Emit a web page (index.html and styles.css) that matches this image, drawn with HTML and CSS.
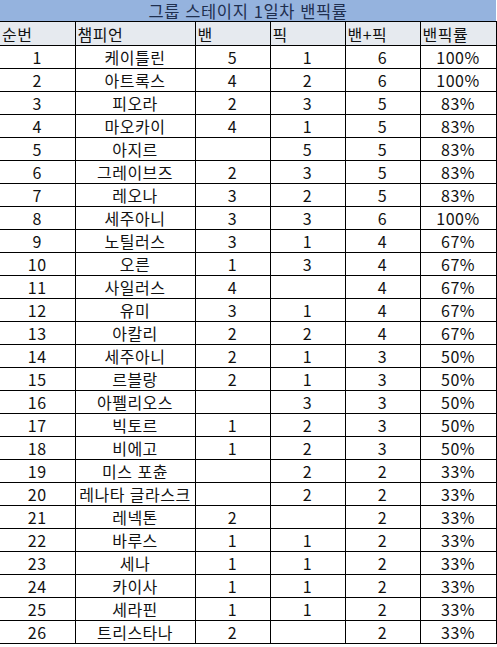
FILE: index.html
```html
<!DOCTYPE html>
<html lang="ko">
<head>
<meta charset="utf-8">
<title>그룹 스테이지 1일차 밴픽률</title>
<link rel="stylesheet" href="styles.css">
</head>
<body>
<table class="sheet">
<colgroup>
<col class="c-no"><col class="c-champ"><col class="c-n"><col class="c-n"><col class="c-n"><col class="c-rate">
</colgroup>
<thead>
<tr class="title"><th colspan="6">그룹 스테이지 1일차 밴픽률</th></tr>
<tr class="head"><th>순번</th><th>챔피언</th><th>밴</th><th>픽</th><th>밴+픽</th><th>밴픽률</th></tr>
</thead>
<tbody>
<tr><td>1</td><td>케이틀린</td><td>5</td><td>1</td><td>6</td><td>100%</td></tr>
<tr><td>2</td><td>아트록스</td><td>4</td><td>2</td><td>6</td><td>100%</td></tr>
<tr><td>3</td><td>피오라</td><td>2</td><td>3</td><td>5</td><td>83%</td></tr>
<tr><td>4</td><td>마오카이</td><td>4</td><td>1</td><td>5</td><td>83%</td></tr>
<tr><td>5</td><td>아지르</td><td></td><td>5</td><td>5</td><td>83%</td></tr>
<tr><td>6</td><td>그레이브즈</td><td>2</td><td>3</td><td>5</td><td>83%</td></tr>
<tr><td>7</td><td>레오나</td><td>3</td><td>2</td><td>5</td><td>83%</td></tr>
<tr><td>8</td><td>세주아니</td><td>3</td><td>3</td><td>6</td><td>100%</td></tr>
<tr><td>9</td><td>노틸러스</td><td>3</td><td>1</td><td>4</td><td>67%</td></tr>
<tr><td>10</td><td>오른</td><td>1</td><td>3</td><td>4</td><td>67%</td></tr>
<tr><td>11</td><td>사일러스</td><td>4</td><td></td><td>4</td><td>67%</td></tr>
<tr><td>12</td><td>유미</td><td>3</td><td>1</td><td>4</td><td>67%</td></tr>
<tr><td>13</td><td>아칼리</td><td>2</td><td>2</td><td>4</td><td>67%</td></tr>
<tr><td>14</td><td>세주아니</td><td>2</td><td>1</td><td>3</td><td>50%</td></tr>
<tr><td>15</td><td>르블랑</td><td>2</td><td>1</td><td>3</td><td>50%</td></tr>
<tr><td>16</td><td>아펠리오스</td><td></td><td>3</td><td>3</td><td>50%</td></tr>
<tr><td>17</td><td>빅토르</td><td>1</td><td>2</td><td>3</td><td>50%</td></tr>
<tr><td>18</td><td>비에고</td><td>1</td><td>2</td><td>3</td><td>50%</td></tr>
<tr><td>19</td><td>미스 포츈</td><td></td><td>2</td><td>2</td><td>33%</td></tr>
<tr><td>20</td><td>레나타 글라스크</td><td></td><td>2</td><td>2</td><td>33%</td></tr>
<tr><td>21</td><td>레넥톤</td><td>2</td><td></td><td>2</td><td>33%</td></tr>
<tr><td>22</td><td>바루스</td><td>1</td><td>1</td><td>2</td><td>33%</td></tr>
<tr><td>23</td><td>세나</td><td>1</td><td>1</td><td>2</td><td>33%</td></tr>
<tr><td>24</td><td>카이사</td><td>1</td><td>1</td><td>2</td><td>33%</td></tr>
<tr><td>25</td><td>세라핀</td><td>1</td><td>1</td><td>2</td><td>33%</td></tr>
<tr><td>26</td><td>트리스타나</td><td>2</td><td></td><td>2</td><td>33%</td></tr>
</tbody>
</table>
</body>
</html>
```
FILE: styles.css
```css
html, body {
  margin: 0;
  padding: 0;
  background: #ffffff;
}
.sheet {
  border-collapse: collapse;
  table-layout: fixed;
  width: 496px;
  font-family: "Noto Sans CJK KR", "Noto Sans", sans-serif;
  font-size: 16px;
  letter-spacing: 0.5px;
  color: #111;
}
.c-no { width: 75px; }
.c-champ { width: 120px; }
.c-n { width: 75px; }
.c-rate { width: 76px; }
.sheet th, .sheet td {
  padding: 0 2px;
  border: 1px solid #000;
  white-space: nowrap;
  overflow: hidden;
  line-height: 20px;
  font-weight: normal;
}
.sheet td {
  height: 22px;
  text-align: center;
}
.title th {
  background: #95b3de;
  color: #1f2f4f;
  font-size: 16.5px;
  letter-spacing: 0.6px;
  height: 21px;
  text-align: center;
  border-top: none;
  border-left: none;
  border-right: none;
}
.head th {
  background: #e6eaef;
  text-align: left;
  height: 23px;
}
.sheet tr > :first-child {
  border-left: none;
}
```
